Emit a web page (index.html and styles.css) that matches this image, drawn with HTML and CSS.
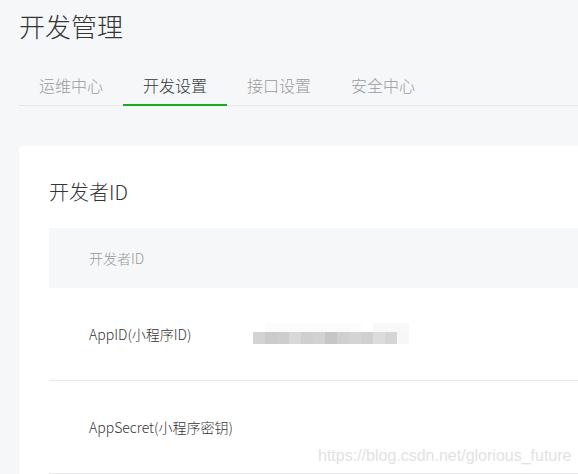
FILE: index.html
```html
<!DOCTYPE html>
<html lang="zh-CN">
<head>
<meta charset="utf-8">
<title>开发管理</title>
<link rel="stylesheet" href="styles.css">
</head>
<body>
<div class="page">
  <h1 class="page-title">开发管理</h1>
  <nav class="tabs">
    <a class="tab">运维中心</a>
    <a class="tab tab-active">开发设置</a>
    <a class="tab">接口设置</a>
    <a class="tab">安全中心</a>
  </nav>
  <section class="card">
    <h2 class="card-title">开发者ID</h2>
    <div class="table">
      <div class="table-head">开发者ID</div>
      <div class="table-row">
        <div class="cell-label">AppID(小程序ID)</div>
        <div class="cell-value">
          <div class="masked">
            <div class="mask-top"></div>
            <div class="mask-bottom"></div>
          </div>
        </div>
      </div>
      <div class="table-row">
        <div class="cell-label">AppSecret(小程序密钥)</div>
        <div class="cell-value"></div>
      </div>
    </div>
  </section>
  <div class="watermark">https://blog.csdn.net/glorious_future</div>
</div>
</body>
</html>
```

FILE: styles.css
```css
html, body {
  margin: 0;
  padding: 0;
  background: #f6f7f9;
}

body {
  font-family: "Noto Sans CJK SC", "Noto Sans", sans-serif;
  font-weight: 300;
  color: #353535;
  overflow: hidden;
  height: 474px;
}

.page {
  position: relative;
  display: flex;
  flex-direction: column;
  padding: 8px 0 0 19px;
  height: 474px;
  box-sizing: border-box;
  overflow: hidden;
}

.page-title {
  margin: 0;
  font-size: 26px;
  line-height: 36px;
  font-weight: 300;
  color: #353535;
}

.tabs {
  display: flex;
  margin-top: 29px;
  border-bottom: 1px solid #e4e6ea;
}

.tab {
  width: 104px;
  text-align: center;
  font-size: 16px;
  line-height: 24px;
  padding-bottom: 7px;
  border-bottom: 2px solid transparent;
  margin-bottom: -1px;
  color: #9a9a9a;
}

.tab-active {
  color: #353535;
  border-bottom-color: #1aad19;
}

.card {
  flex: 1;
  min-height: 0;
  margin-top: 40px;
  background: #ffffff;
  border-radius: 4px 0 0 0;
  padding: 32px 0 0 30px;
}

.card-title {
  margin: 0;
  font-size: 20px;
  line-height: 28px;
  font-weight: 300;
  color: #353535;
}

.table {
  margin-top: 22px;
}

.table-head {
  background: #f6f7f9;
  height: 60px;
  line-height: 60px;
  padding-left: 40px;
  font-size: 14px;
  color: #9a9a9a;
}

.table-row {
  display: grid;
  grid-template-columns: 204px 1fr;
  align-items: center;
  height: 92px;
  border-bottom: 1px solid #e7e7eb;
  font-size: 14px;
  color: #353535;
}

.cell-label {
  padding-left: 40px;
}

.masked {
  width: 156px;
  margin-top: -2px;
}

.mask-top {
  height: 9px;
  margin-left: 12px;
  width: 144px;
  background: linear-gradient(to right,
    #fbfbfb 0 96px, #ffffff 96px 108px, #f8f8f8 108px 144px);
}

.mask-bottom {
  height: 12px;
  background: linear-gradient(to right,
    #d3d3d3 0 12px, #cbcbcb 12px 24px, #cdcdcd 24px 36px,
    #d8d8d8 36px 48px, #cfcfcf 48px 60px, #d2d2d2 60px 72px,
    #c6c6c6 72px 84px, #cfcfcf 84px 96px, #d4d4d4 96px 108px,
    #d0d0d0 108px 120px, #dcdcdc 120px 132px, #d5d5d5 132px 144px,
    #f7f7f7 144px 156px);
}

.watermark {
  position: absolute;
  left: 318px;
  top: 447px;
  font-family: "Liberation Sans", Arial, sans-serif;
  font-size: 16px;
  line-height: 18px;
  color: #e2e2e2;
  white-space: nowrap;
}
```
